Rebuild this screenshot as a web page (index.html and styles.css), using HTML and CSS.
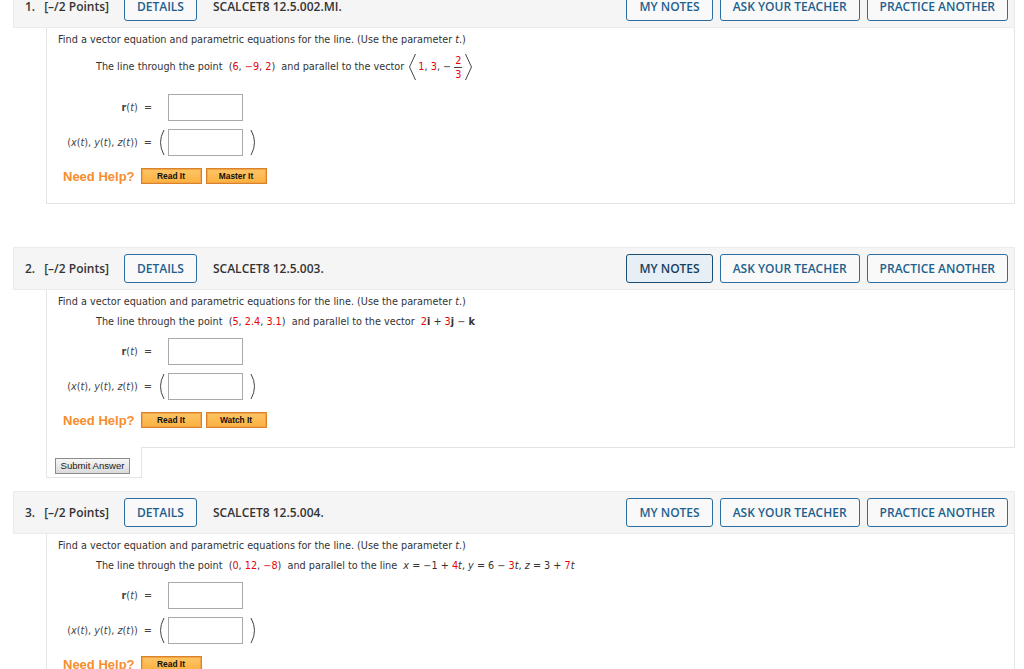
FILE: index.html
```html
<!DOCTYPE html>
<html>
<head>
<meta charset="utf-8">
<link rel="stylesheet" href="styles.css">
</head>
<body>
<div class="page">

<section class="q no-submit">
  <div class="q-head">
    <div class="q-left">
      <span class="num">1.</span><span class="pts">[–/2 Points]</span>
      <span class="btn">DETAILS</span>
      <span class="code">SCALCET8 12.5.002.MI.</span>
    </div>
    <div class="q-right">
      <span class="btn">MY NOTES</span>
      <span class="btn">ASK YOUR TEACHER</span>
      <span class="btn">PRACTICE ANOTHER</span>
    </div>
  </div>
  <div class="q-body">
    <p class="prompt">Find a vector equation and parametric equations for the line. (Use the parameter <i>t</i>.)</p>
    <p class="given tall">The line through the point&nbsp; (<span class="red">6</span>, <span class="red">−9</span>, <span class="red">2</span>)&nbsp; and parallel to the vector&nbsp;<span class="vec"><svg class="ang" viewBox="0 0 9 28" width="9" height="28"><polyline points="7.5,1 1.5,14 7.5,27" fill="none" stroke="#444" stroke-width="1"/></svg><span class="red">1</span>,&nbsp;<span class="red">3</span>,&nbsp;−&nbsp;<span class="frac"><span class="red top">2</span><span class="red bot">3</span></span><svg class="ang" viewBox="0 0 9 28" width="9" height="28"><polyline points="1.5,1 7.5,14 1.5,27" fill="none" stroke="#444" stroke-width="1"/></svg></span></p>
    <div class="answers">
      <span class="lbl"><b>r</b>(<i>t</i>)&nbsp; =</span><span></span><span class="inp"></span><span></span>
      <span class="lbl">(<i>x</i>(<i>t</i>), <i>y</i>(<i>t</i>), <i>z</i>(<i>t</i>))&nbsp; =</span>
      <svg class="par" viewBox="0 0 10 27" width="10" height="27"><path d="M8 1 Q1 13.5 8 26" fill="none" stroke="#444" stroke-width="1"/></svg>
      <span class="inp"></span>
      <svg class="par rp" viewBox="0 0 10 27" width="10" height="27"><path d="M2 1 Q9 13.5 2 26" fill="none" stroke="#444" stroke-width="1"/></svg>
    </div>
    <div class="help">
      <span class="need">Need Help?</span>
      <span class="hbtn">Read It</span>
      <span class="hbtn">Master It</span>
    </div>
  </div>
</section>

<section class="q">
  <div class="q-head">
    <div class="q-left">
      <span class="num">2.</span><span class="pts">[–/2 Points]</span>
      <span class="btn">DETAILS</span>
      <span class="code">SCALCET8 12.5.003.</span>
    </div>
    <div class="q-right">
      <span class="btn active">MY NOTES</span>
      <span class="btn">ASK YOUR TEACHER</span>
      <span class="btn">PRACTICE ANOTHER</span>
    </div>
  </div>
  <div class="q-body">
    <p class="prompt">Find a vector equation and parametric equations for the line. (Use the parameter <i>t</i>.)</p>
    <p class="given">The line through the point&nbsp; (<span class="red">5</span>, <span class="red">2.4</span>, <span class="red">3.1</span>)&nbsp; and parallel to the vector&nbsp; <span class="red">2</span><b>i</b> + <span class="red">3</span><b>j</b> − <b>k</b></p>
    <div class="answers">
      <span class="lbl"><b>r</b>(<i>t</i>)&nbsp; =</span><span></span><span class="inp"></span><span></span>
      <span class="lbl">(<i>x</i>(<i>t</i>), <i>y</i>(<i>t</i>), <i>z</i>(<i>t</i>))&nbsp; =</span>
      <svg class="par" viewBox="0 0 10 27" width="10" height="27"><path d="M8 1 Q1 13.5 8 26" fill="none" stroke="#444" stroke-width="1"/></svg>
      <span class="inp"></span>
      <svg class="par rp" viewBox="0 0 10 27" width="10" height="27"><path d="M2 1 Q9 13.5 2 26" fill="none" stroke="#444" stroke-width="1"/></svg>
    </div>
    <div class="help">
      <span class="need">Need Help?</span>
      <span class="hbtn">Read It</span>
      <span class="hbtn">Watch It</span>
    </div>
  </div>
  <div class="submit"><span class="sbtn">Submit Answer</span></div>
</section>

<section class="q">
  <div class="q-head">
    <div class="q-left">
      <span class="num">3.</span><span class="pts">[–/2 Points]</span>
      <span class="btn">DETAILS</span>
      <span class="code">SCALCET8 12.5.004.</span>
    </div>
    <div class="q-right">
      <span class="btn">MY NOTES</span>
      <span class="btn">ASK YOUR TEACHER</span>
      <span class="btn">PRACTICE ANOTHER</span>
    </div>
  </div>
  <div class="q-body">
    <p class="prompt">Find a vector equation and parametric equations for the line. (Use the parameter <i>t</i>.)</p>
    <p class="given">The line through the point&nbsp; (<span class="red">0</span>, <span class="red">12</span>, <span class="red">−8</span>)&nbsp; and parallel to the line&nbsp; <i>x</i> = −1 + <span class="red">4</span><i>t</i>, <i>y</i> = 6 − <span class="red">3</span><i>t</i>, <i>z</i> = 3 + <span class="red">7</span><i>t</i></p>
    <div class="answers">
      <span class="lbl"><b>r</b>(<i>t</i>)&nbsp; =</span><span></span><span class="inp"></span><span></span>
      <span class="lbl">(<i>x</i>(<i>t</i>), <i>y</i>(<i>t</i>), <i>z</i>(<i>t</i>))&nbsp; =</span>
      <svg class="par" viewBox="0 0 10 27" width="10" height="27"><path d="M8 1 Q1 13.5 8 26" fill="none" stroke="#444" stroke-width="1"/></svg>
      <span class="inp"></span>
      <svg class="par rp" viewBox="0 0 10 27" width="10" height="27"><path d="M2 1 Q9 13.5 2 26" fill="none" stroke="#444" stroke-width="1"/></svg>
    </div>
    <div class="help">
      <span class="need">Need Help?</span>
      <span class="hbtn">Read It</span>
    </div>
  </div>
</section>

</div>
</body>
</html>
```

FILE: styles.css
```css
* { box-sizing: border-box; }

html, body {
  margin: 0;
  background: #fff;
}

.page {
  margin: -15px 0 0 13px;
  width: 1002px;
}

.q { margin-bottom: 13px; }
.q.no-submit { margin-bottom: 43px; }

.q-head {
  display: flex;
  justify-content: space-between;
  align-items: center;
  height: 43px;
  padding: 0 6px 0 11px;
  background: #f5f5f5;
  border: 1px solid #ebebeb;
  font-family: "Open Sans", sans-serif;
  font-size: 12px;
  font-weight: 600;
  color: #333;
}

.q-left, .q-right {
  display: flex;
  align-items: center;
}

.q-right { gap: 7px; }

.num { margin-right: 9px; }
.pts { margin-right: 15px; }
.code { margin-left: 16px; }

.btn {
  display: inline-flex;
  align-items: center;
  height: 29px;
  padding: 0 12px;
  border: 1.5px solid #2b6ea3;
  border-radius: 3px;
  background: #f9f9f9;
  color: #1f5f8e;
  white-space: nowrap;
}

.btn.active {
  background: #e6eef6;
  border-color: #1c4d73;
  color: #173f5e;
}

.q-body {
  margin-left: 33px;
  border: 1px solid #e4e4e4;
  border-top: none;
  padding: 5px 12px 19px 11px;
  font-family: "DejaVu Sans", Verdana, sans-serif;
  font-size: 9.7px;
  color: #333;
}

.prompt {
  margin: 0;
  line-height: 14px;
  white-space: nowrap;
}

.given {
  margin: 6px 0 0 38px;
  line-height: 14px;
  display: flex;
  align-items: center;
  white-space: pre;
}

.given.tall { padding-bottom: 4px; }

.red { color: #e8000b; }

.vec {
  display: inline-flex;
  align-items: center;
  height: 28px;
}

.ang { display: block; margin: 0 1px; }

.frac {
  display: inline-flex;
  flex-direction: column;
  align-items: center;
  line-height: 11px;
  margin-right: 1px;
}

.frac .top {
  border-bottom: 1px solid #444;
  padding: 0 1px 1px;
}

.frac .bot { padding-top: 1px; }

.answers {
  margin-top: 9px;
  display: grid;
  grid-template-columns: 94px 16px 75px max-content;
  justify-content: start;
  row-gap: 8px;
  align-items: center;
}

.lbl {
  text-align: right;
  color: #444;
  white-space: nowrap;
}

.inp {
  display: block;
  width: 75px;
  height: 27px;
  border: 1px solid #a9a9a9;
  background: #fff;
}

.par {
  display: block;
  justify-self: center;
  margin-left: 2px;
}

.par.rp { margin-left: 6px; }

.help {
  margin-top: 12px;
  padding-left: 5px;
  display: flex;
  align-items: center;
  height: 16px;
}

.need {
  font-family: "Liberation Sans", Arial, sans-serif;
  font-weight: bold;
  font-size: 13px;
  color: #f68d2e;
  margin-right: 6px;
}

.hbtn {
  display: inline-flex;
  align-items: center;
  justify-content: center;
  width: 61px;
  height: 16px;
  margin-right: 4px;
  border: 1px solid #d9822b;
  box-shadow: inset 0 0 0 1px #f3a443;
  background: linear-gradient(#fdc467, #fbb13f);
  font-family: "Liberation Sans", Arial, sans-serif;
  font-weight: bold;
  font-size: 8.4px;
  color: #111;
}

.submit {
  position: relative;
  margin: -1px 0 0 33px;
  width: 96px;
  height: 31px;
  padding: 8px 0 0 8px;
  border: 1px solid #e4e4e4;
  border-top: none;
  background: #fff;
}

.sbtn {
  display: inline-flex;
  align-items: center;
  justify-content: center;
  width: 75px;
  height: 16px;
  border: 1px solid #8c8c8c;
  background: linear-gradient(#f7f7f7, #dadada);
  font-family: "Liberation Sans", Arial, sans-serif;
  font-size: 9.6px;
  color: #222;
}
```
